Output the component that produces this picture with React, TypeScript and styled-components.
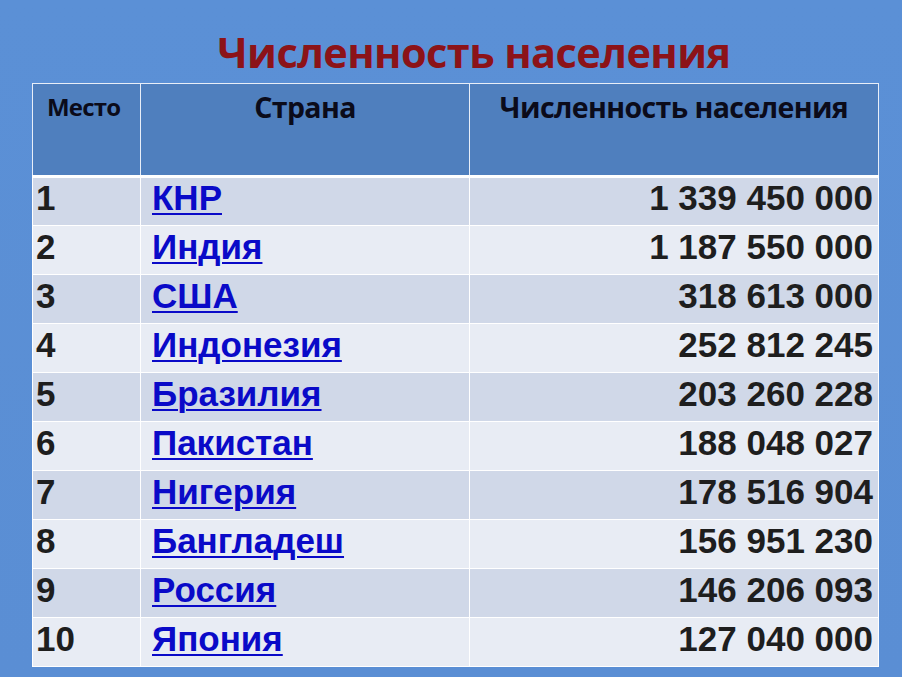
import React from 'react';
import styled, { createGlobalStyle } from 'styled-components';

const GlobalStyle = createGlobalStyle`
    html, body {
        margin: 0;
        padding: 0;
        background: #5a8ed4;
    }
`;

const Slide = styled.div`
    width: 902px;
    height: 677px;
    box-sizing: border-box;
    padding: 26px 24px 0 32px;
    background: linear-gradient(180deg, #5b90d6 0%, #5a8ed4 100%);
    overflow: hidden;
`;

const Title = styled.h1`
    margin: 0 0 4px 0;
    height: 53px;
    padding-left: 38px;
    text-align: center;
    font-family: 'Open Sans', 'Noto Sans', sans-serif;
    font-weight: 700;
    font-size: 41.5px;
    line-height: 53px;
    letter-spacing: -0.6px;
    color: #8c1318;
`;

const Table = styled.table`
    width: 846px;
    border-collapse: collapse;
    table-layout: fixed;
`;

const HeadCell = styled.th<{ $small?: boolean; $width: number }>`
    width: ${(p) => p.$width}px;
    height: 93px;
    box-sizing: border-box;
    padding: ${(p) => (p.$small ? '6px 0 0 14px' : '4px 0 0 0')};
    vertical-align: top;
    text-align: ${(p) => (p.$small ? 'left' : 'center')};
    background: #4f7fbe;
    border: 1px solid #e8eef8;
    border-bottom: 3px solid #ffffff;
    font-family: 'Open Sans', 'Noto Sans', sans-serif;
    font-weight: 700;
    font-size: ${(p) => (p.$small ? '24px' : '28.5px')};
    letter-spacing: ${(p) => (p.$small ? '-0.8px' : '-0.6px')};
    color: #0b0b1a;
`;

const Row = styled.tr<{ $even: boolean }>`
    height: 49px;
    background: ${(p) => (p.$even ? '#e8ecf4' : '#d0d8e8')};
`;

const Cell = styled.td<{ $align?: 'left' | 'right'; $pad: string }>`
    box-sizing: border-box;
    padding: ${(p) => p.$pad};
    text-align: ${(p) => p.$align ?? 'left'};
    vertical-align: middle;
    border: 1px solid #ffffff;
    font-family: 'Liberation Sans', Arial, sans-serif;
    font-weight: 700;
    font-size: 35px;
    line-height: 40px;
    color: #1e1e1e;
    white-space: nowrap;
`;

const CountryLink = styled.a`
    color: #0a0ac8;
    text-decoration: underline;
    text-decoration-thickness: 2px;
    text-underline-offset: 3px;
`;

const rows: [string, string][] = [
    ['КНР', '1 339 450 000'],
    ['Индия', '1 187 550 000'],
    ['США', '318 613 000'],
    ['Индонезия', '252 812 245'],
    ['Бразилия', '203 260 228'],
    ['Пакистан', '188 048 027'],
    ['Нигерия', '178 516 904'],
    ['Бангладеш', '156 951 230'],
    ['Россия', '146 206 093'],
    ['Япония', '127 040 000'],
];

function App(): React.ReactElement {
    return (
        <>
            <GlobalStyle />
            <Slide>
                <Title>Численность населения</Title>
                <Table>
                    <thead>
                        <tr>
                            <HeadCell $small $width={108}>
                                Место
                            </HeadCell>
                            <HeadCell $width={329}>Страна</HeadCell>
                            <HeadCell $width={409}>Численность населения</HeadCell>
                        </tr>
                    </thead>
                    <tbody>
                        {rows.map(([country, count], i) => (
                            <Row key={country} $even={i % 2 === 1}>
                                <Cell $pad="0 0 7px 3px">{i + 1}</Cell>
                                <Cell $pad="0 0 7px 11px">
                                    <CountryLink href="#">{country}</CountryLink>
                                </Cell>
                                <Cell $align="right" $pad="0 5px 7px 0">
                                    {count}
                                </Cell>
                            </Row>
                        ))}
                    </tbody>
                </Table>
            </Slide>
        </>
    );
}

export default App;
